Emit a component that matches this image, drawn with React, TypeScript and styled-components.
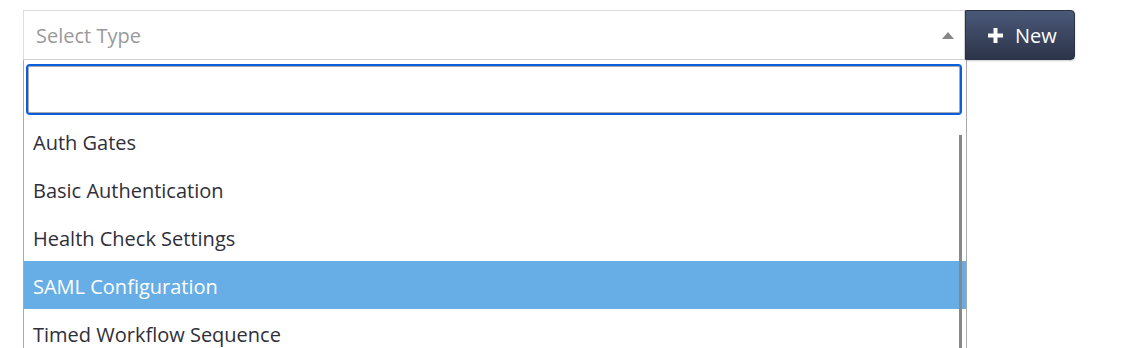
import React from "react";
import styled, { createGlobalStyle } from "styled-components";

const Global = createGlobalStyle`
  html, body { margin: 0; padding: 0; background: #fff; }
  body { font-family: "Open Sans", "Liberation Sans", sans-serif; overflow: hidden; }
  * { box-sizing: border-box; }
`;

const Page = styled.div`
  padding: 10px 0 0 23px;
  width: 1128px;
  height: 348px;
`;

const Row = styled.div`
  display: flex;
  align-items: stretch;
`;

const Field = styled.div`
  width: 942px;
  display: flex;
  flex-direction: column;
`;

const Selection = styled.div`
  height: 50px;
  border: 1px solid #dcdcdc;
  border-bottom-color: #d0d0d0;
  display: flex;
  align-items: center;
  justify-content: space-between;
  padding: 0 10px 0 12px;
`;

const Placeholder = styled.span`
  color: #9a9a9a;
  font-size: 20px;
  margin-top: 1px;
`;

const Arrow = styled.span`
  width: 0;
  height: 0;
  border-left: 6px solid transparent;
  border-right: 6px solid transparent;
  border-bottom: 7px solid #888;
`;

const NewButton = styled.button`
  width: 110px;
  height: 50px;
  border: 1px solid #2a3244;
  border-radius: 0 4px 4px 0;
  background: linear-gradient(#4a5878, #2c3449);
  color: #fff;
  font-family: "Open Sans", "Liberation Sans", sans-serif;
  font-size: 20px;
  display: flex;
  align-items: center;
  gap: 12px;
  padding: 0 0 0 22px;
  box-shadow: 0 1px 2px rgba(0, 0, 0, 0.2);
`;

const Dropdown = styled.div`
  position: relative;
  margin-right: -2px;
  border-left: 1px solid #aaa;
  border-right: 1px solid #aaa;
  height: 288px;
  overflow: hidden;
`;

const SearchWrap = styled.div`
  padding: 6px 6px 4px 4px;
`;

const Search = styled.input`
  display: block;
  width: 100%;
  height: 47px;
  border: 1px solid #aaa;
  border-radius: 2px;
  outline: 2px solid #0a5ddb;
  outline-offset: 0;
  font-size: 20px;
`;

const List = styled.ul`
  list-style: none;
  margin: 0;
  padding: 0;
`;

const Item = styled.li<{ $active?: boolean }>`
  height: 48px;
  display: flex;
  align-items: center;
  padding: 2px 0 0 9px;
  font-size: 20px;
  color: ${(p) => (p.$active ? "#fff" : "#2f2f3a")};
  background: ${(p) => (p.$active ? "#67aee6" : "transparent")};
`;

const Thumb = styled.div`
  position: absolute;
  right: 4px;
  top: 75px;
  width: 3px;
  height: 240px;
  background: #888;
`;

const Plus = () => (
  <svg width="15" height="15" viewBox="0 0 15 15">
    <rect x="5.5" y="0" width="4" height="15" fill="#fff" />
    <rect x="0" y="5.5" width="15" height="4" fill="#fff" />
  </svg>
);

const items = [
  "Auth Gates",
  "Basic Authentication",
  "Health Check Settings",
  "SAML Configuration",
  "Timed Workflow Sequence",
];

export default function App() {
  return (
    <>
      <Global />
      <Page>
        <Row>
          <Field>
            <Selection>
              <Placeholder>Select Type</Placeholder>
              <Arrow />
            </Selection>
            <Dropdown>
              <SearchWrap>
                <Search type="text" />
              </SearchWrap>
              <List>
                {items.map((t) => (
                  <Item key={t} $active={t === "SAML Configuration"}>
                    {t}
                  </Item>
                ))}
              </List>
              <Thumb />
            </Dropdown>
          </Field>
          <NewButton>
            <Plus />
            New
          </NewButton>
        </Row>
      </Page>
    </>
  );
}
